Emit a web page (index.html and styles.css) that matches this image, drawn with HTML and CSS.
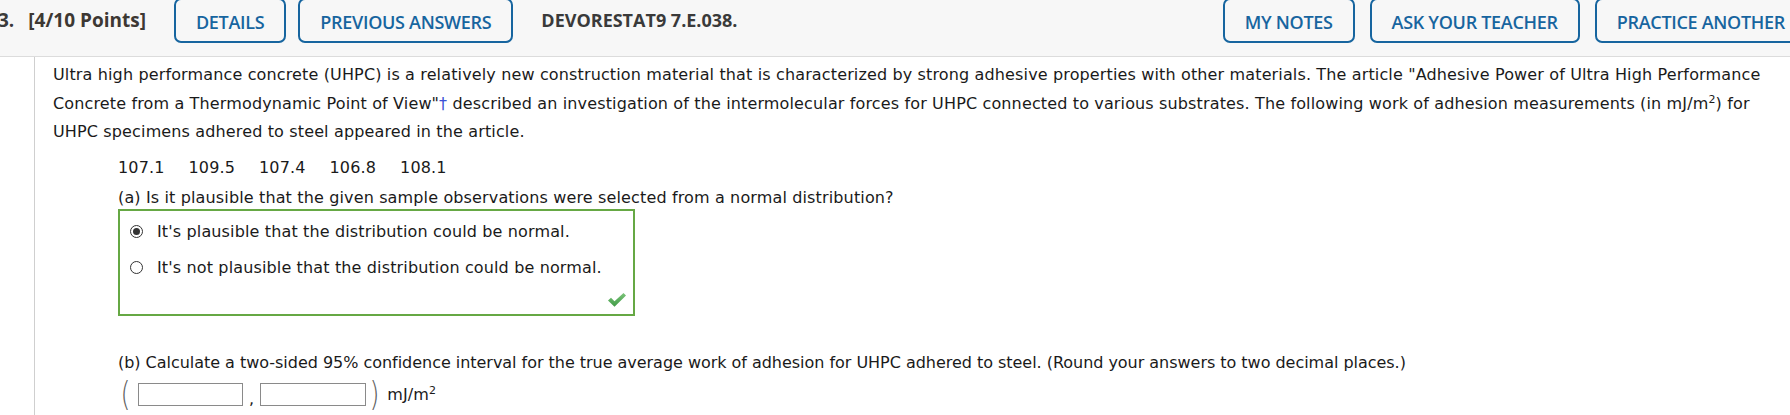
FILE: index.html
```html
<!DOCTYPE html>
<html>
<head>
<meta charset="utf-8">
<link rel="stylesheet" href="styles.css">
</head>
<body>
<div class="page">
  <header class="qhead">
    <div class="qhead-inner">
      <span class="qnum">3.</span>
      <span class="qpoints">[4/10 Points]</span>
      <button class="btn btn-first">DETAILS</button>
      <button class="btn">PREVIOUS ANSWERS</button>
      <span class="qcode">DEVORESTAT9 7.E.038.</span>
      <div class="right-btns">
        <button class="btn">MY NOTES</button>
        <button class="btn">ASK YOUR TEACHER</button>
        <button class="btn">PRACTICE ANOTHER</button>
      </div>
    </div>
  </header>
  <main class="qbody">
    <p class="intro">Ultra high performance concrete (UHPC) is a relatively new construction material that is characterized by strong adhesive properties with other materials. The article "Adhesive Power of Ultra High Performance Concrete from a Thermodynamic Point of View"<span class="dagger">†</span> described an investigation of the intermolecular forces for UHPC connected to various substrates. The following work of adhesion measurements (in mJ/m<sup>2</sup>) for UHPC specimens adhered to steel appeared in the article.</p>
    <div class="indent">
      <div class="data">
        <span>107.1</span><span>109.5</span><span>107.4</span><span>106.8</span><span>108.1</span>
      </div>
      <p class="part">(a) Is it plausible that the given sample observations were selected from a normal distribution?</p>
      <div class="answer-box">
        <label class="opt"><span class="radio checked"></span>It's plausible that the distribution could be normal.</label>
        <label class="opt"><span class="radio"></span>It's not plausible that the distribution could be normal.</label>
        <svg class="check" width="20" height="16" viewBox="0 0 20 16">
          <defs>
            <linearGradient id="cg" x1="0" y1="0" x2="0" y2="1">
              <stop offset="0" stop-color="#7cc47a"/>
              <stop offset="1" stop-color="#3f9a45"/>
            </linearGradient>
          </defs>
          <path d="M1 8.5 L4 5.8 L7.5 9.2 L16.5 1 L19 3.6 L7.5 14.8 Z" fill="url(#cg)"/>
        </svg>
      </div>
      <p class="part part-b">(b) Calculate a two-sided 95% confidence interval for the true average work of adhesion for UHPC adhered to steel. (Round your answers to two decimal places.)</p>
      <div class="interval">
        <span class="paren">(</span>
        <span class="field field-1"></span>
        <span class="comma">,</span>
        <span class="field field-2"></span>
        <span class="paren paren-r">)</span>
        <span class="unit">mJ/m<sup>2</sup></span>
      </div>
    </div>
  </main>
</div>
</body>
</html>
```
FILE: styles.css
```css
html, body {
  margin: 0;
  padding: 0;
  background: #ffffff;
  overflow: hidden;
}
.page {
  width: 1790px;
  height: 415px;
  overflow: hidden;
}
.qhead {
  height: 56px;
  background: #f7f7f7;
  border-bottom: 1px solid #dcdcdc;
  overflow: hidden;
}
.qhead-inner {
  display: flex;
  align-items: center;
  width: 1809px;
  margin-left: -2px;
  margin-top: -3px;
  height: 46px;
  font-family: "Open Sans", sans-serif;
}
.qnum {
  font-size: 19px;
  font-weight: 700;
  color: #3b3b3b;
  margin-right: 14px;
}
.qpoints {
  font-size: 19px;
  font-weight: 700;
  color: #3d3833;
  margin-right: 28px;
}
.btn {
  font-family: "Open Sans", sans-serif;
  font-size: 18px;
  font-weight: 600;
  letter-spacing: -0.3px;
  color: #17659f;
  background: transparent;
  border: 2px solid #17659f;
  border-radius: 7px;
  height: 45px;
  padding: 3px 20px 0 20px;
  margin: 0 12px 0 0;
  line-height: 24px;
  white-space: nowrap;
}
.qcode {
  font-size: 18px;
  font-weight: 700;
  color: #3a3a3a;
  margin-left: 16px;
}
.right-btns {
  margin-left: auto;
  display: flex;
  gap: 15px;
}
.right-btns .btn {
  margin: 0;
}
.qbody {
  margin-left: 34px;
  border-left: 1px solid #cfcfcf;
  height: 358px;
  padding: 4px 0 0 18px;
  font-family: "DejaVu Sans", Verdana, sans-serif;
  font-size: 16px;
  letter-spacing: 0.14px;
  color: #1a1a1a;
}
.intro {
  margin: 0;
  width: 1728px;
  line-height: 28.5px;
}
sup {
  font-size: 11px;
  line-height: 0;
  vertical-align: 6px;
}
.dagger {
  color: #3b4fd6;
}
.indent {
  padding-left: 65px;
}
.data {
  display: flex;
  gap: 24px;
  margin-top: 7px;
  line-height: 28px;
}
.part {
  margin: 2px 0 0 0;
  line-height: 28px;
}
.answer-box {
  position: relative;
  border: 2px solid #66a844;
  margin-top: -3px;
  padding-top: 7px;
  box-sizing: border-box;
  height: 107px;
  width: 517px;
}
.opt {
  display: flex;
  align-items: center;
  height: 28px;
  margin-bottom: 8px;
  padding-left: 10px;
}
.radio {
  width: 13px;
  height: 13px;
  border: 1px solid #333;
  border-radius: 50%;
  box-sizing: border-box;
  margin-right: 14px;
  background: #fff;
  position: relative;
  flex: none;
}
.radio.checked::after {
  content: "";
  position: absolute;
  left: 2px;
  top: 2px;
  width: 7px;
  height: 7px;
  border-radius: 50%;
  background: #333;
}
.check {
  position: absolute;
  right: 6px;
  bottom: 6px;
}
.part-b {
  margin-top: 33px;
  letter-spacing: -0.03px;
}
.interval {
  display: flex;
  align-items: center;
  height: 36px;
  margin-top: 0;
}
.paren {
  display: inline-block;
  width: 15px;
  text-align: center;
  font-family: "DejaVu Sans", sans-serif;
  font-size: 34px;
  font-weight: 200;
  color: #5e5e5e;
  transform: scaleX(0.75);
  line-height: 36px;
  margin-top: -2px;
}
.paren-r {
  margin-left: 1px;
}
.field {
  height: 23px;
  border: 1px solid #8a8a8a;
  box-sizing: border-box;
  background: #fff;
}
.field-1 {
  width: 105px;
  margin-left: 5px;
}
.field-2 {
  width: 106px;
}
.comma {
  margin: 0 6px 0 6px;
  padding-top: 8px;
}
.unit {
  margin-left: 5px;
}
```
